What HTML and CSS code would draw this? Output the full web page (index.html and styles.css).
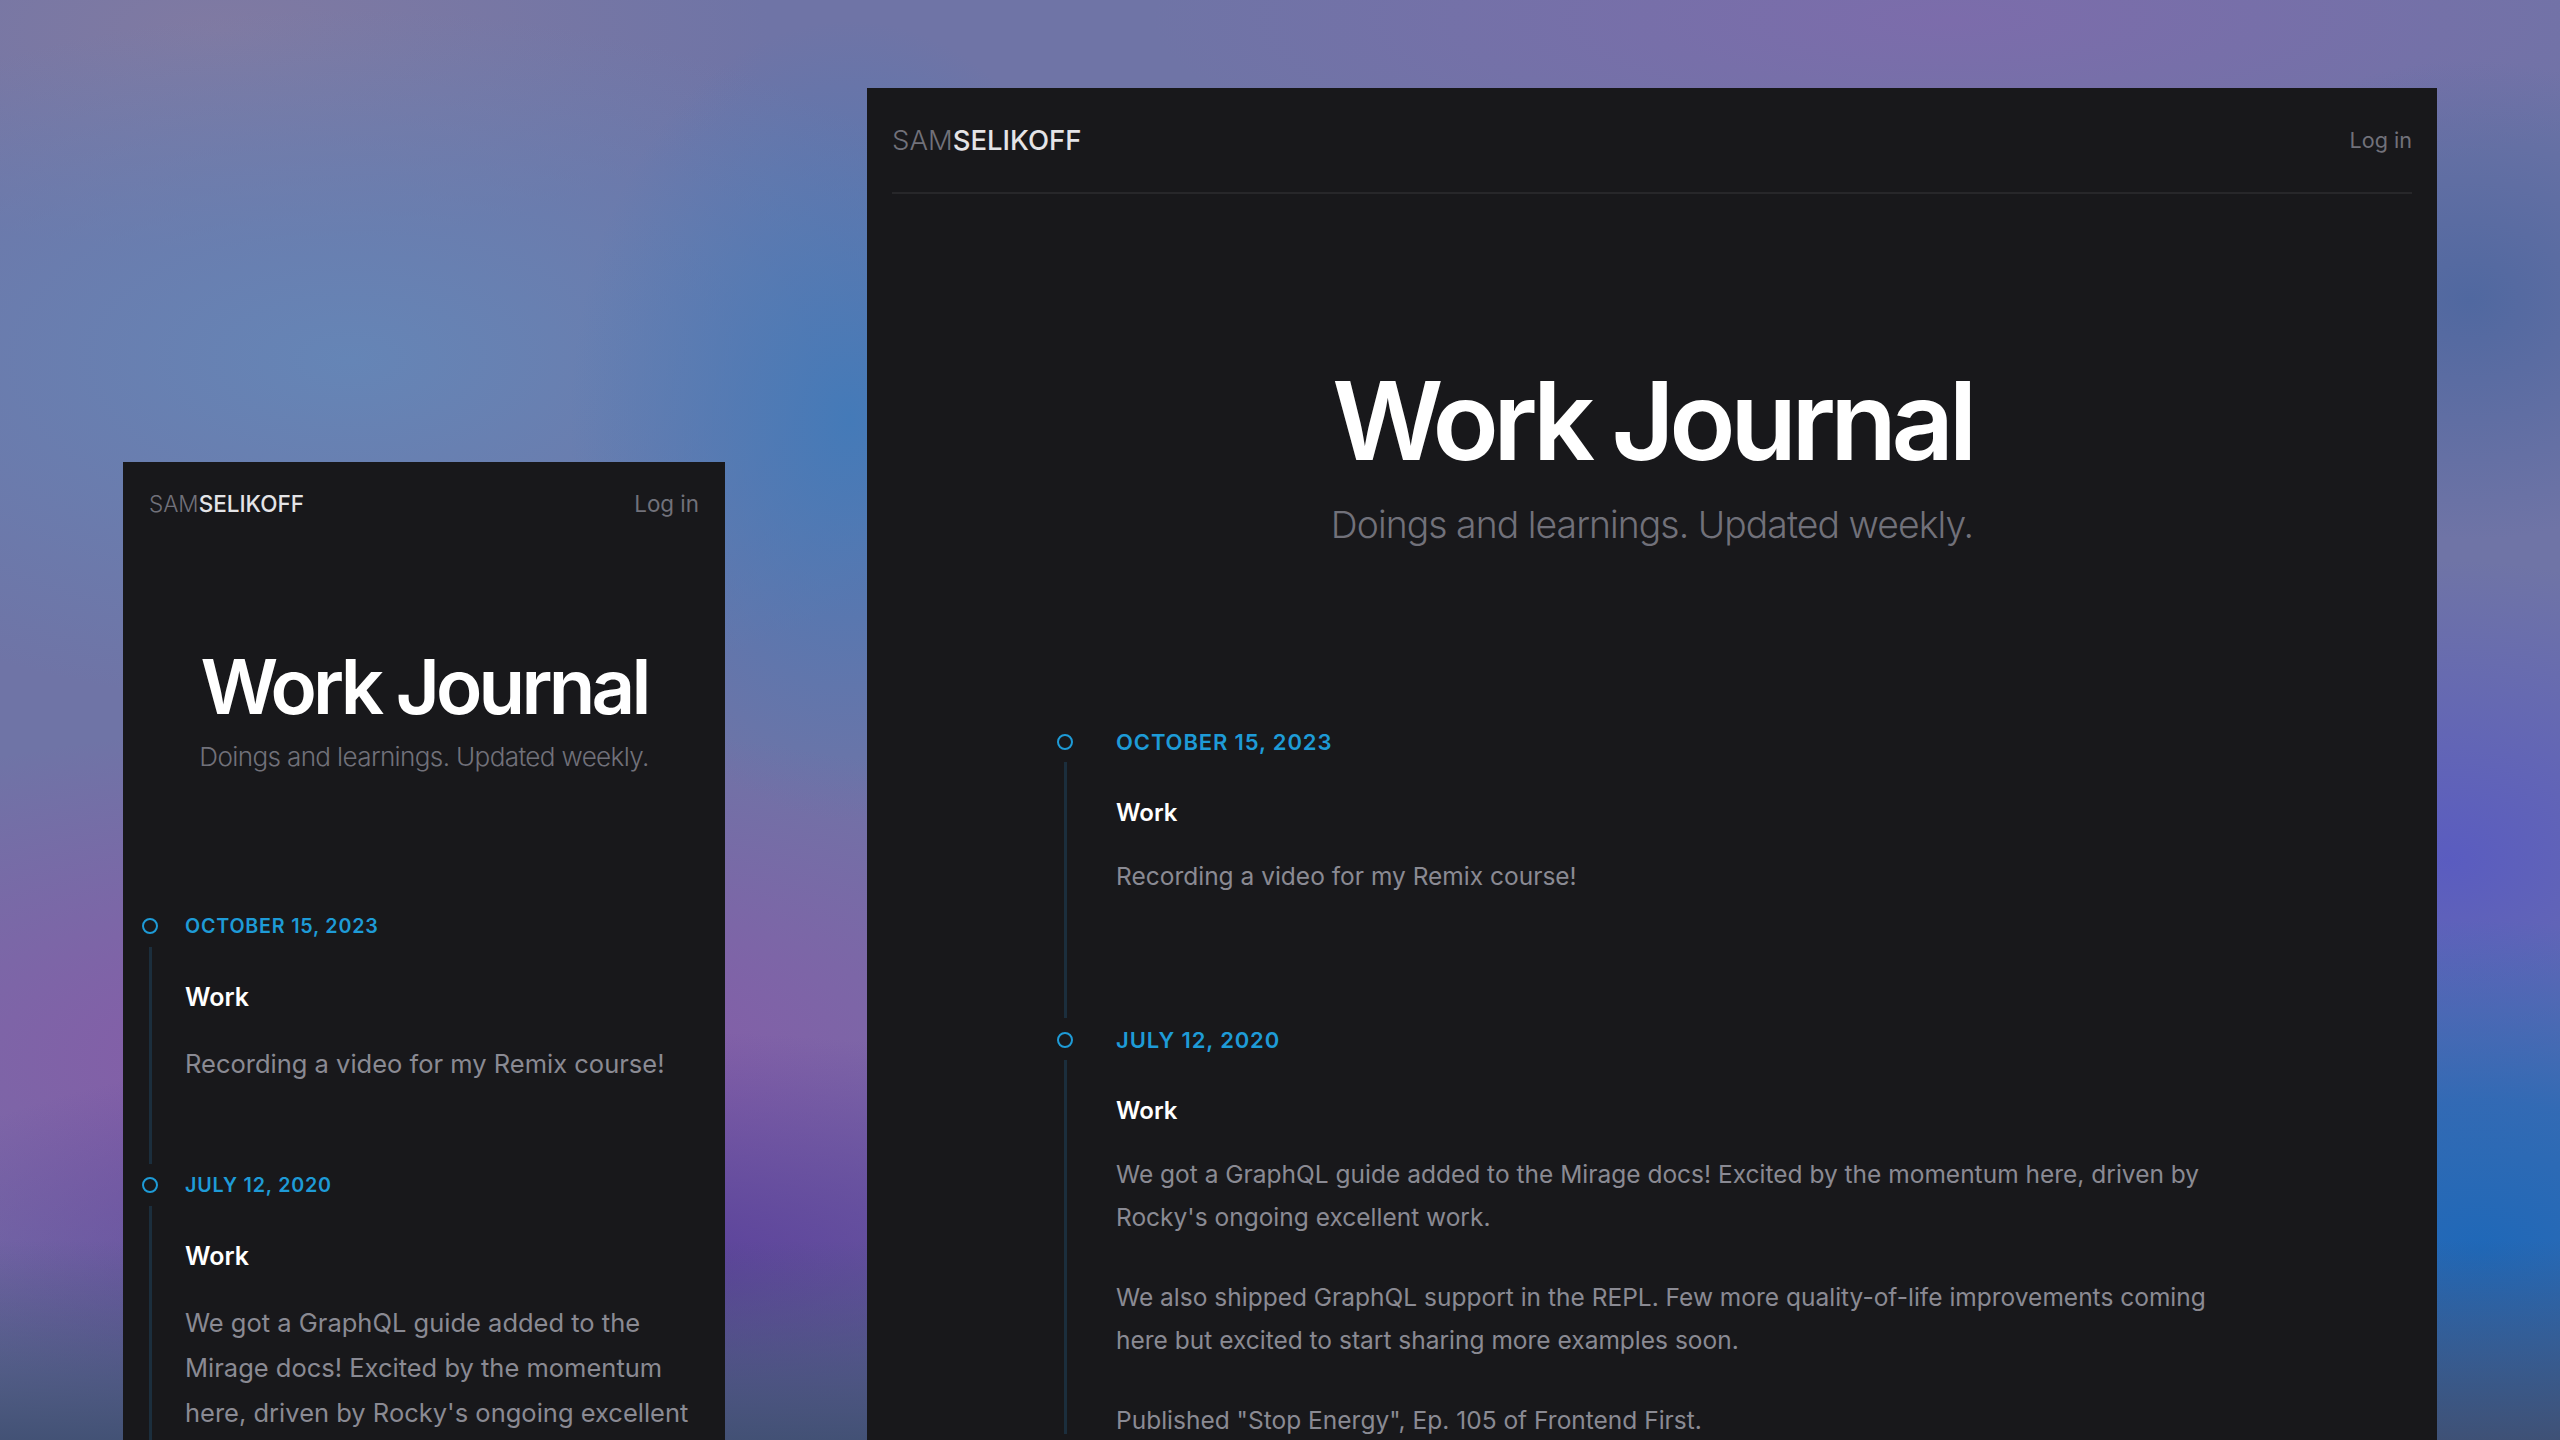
FILE: index.html
```html
<!DOCTYPE html>
<html lang="en">
<head>
    <meta charset="UTF-8">
    <title>Work Journal</title>
    <link rel="stylesheet" href="styles.css">
</head>
<body>
    <!-- small window -->
    <div class="window window-small">
        <header class="nav">
            <div class="logo"><span class="logo-first">SAM</span><span class="logo-last">SELIKOFF</span></div>
            <a class="login">Log in</a>
        </header>
        <div class="hero">
            <h1>Work Journal</h1>
            <p>Doings and learnings. Updated weekly.</p>
        </div>
        <div class="timeline">
            <div class="entry">
                <div class="date">October 15, 2023</div>
                <h2>Work</h2>
                <p>Recording a video for my Remix course!</p>
            </div>
            <div class="entry">
                <div class="date">July 12, 2020</div>
                <h2>Work</h2>
                <p>We got a GraphQL guide added to the Mirage docs! Excited by the momentum here, driven by Rocky's ongoing excellent work.</p>
            </div>
        </div>
    </div>

    <!-- big window -->
    <div class="window window-big">
        <header class="nav">
            <div class="logo"><span class="logo-first">SAM</span><span class="logo-last">SELIKOFF</span></div>
            <a class="login">Log in</a>
        </header>
        <div class="hero">
            <h1>Work Journal</h1>
            <p>Doings and learnings. Updated weekly.</p>
        </div>
        <div class="timeline">
            <div class="entry">
                <div class="date">October 15, 2023</div>
                <h2>Work</h2>
                <p>Recording a video for my Remix course!</p>
            </div>
            <div class="entry">
                <div class="date">July 12, 2020</div>
                <h2>Work</h2>
                <p>We got a GraphQL guide added to the Mirage docs! Excited by the momentum here, driven by Rocky's ongoing excellent work.</p>
                <p>We also shipped GraphQL support in the REPL. Few more quality-of-life improvements coming here but excited to start sharing more examples soon.</p>
                <p>Published "Stop Energy", Ep. 105 of Frontend First.</p>
            </div>
        </div>
    </div>
</body>
</html>
```

FILE: styles.css
```css
*, *::before{
    margin: 0;
    padding: 0;
    box-sizing: border-box;
}

body{
    position: relative;
    height: 1440px;
    overflow: hidden;
    font-family: 'Inter', sans-serif;
    background-color: #6b74a8;
    background-image:
        linear-gradient(to bottom, rgba(62,78,112,0) 1240px, rgba(62,78,112,0.9) 1440px),
        radial-gradient(ellipse 500px 330px at 2480px 1250px, #1f68b8 0%, rgba(31,104,184,0.75) 45%, rgba(31,104,184,0) 100%),
        radial-gradient(ellipse 420px 300px at 2450px 860px, #5a5cc0 0%, rgba(90,92,192,0) 100%),
        radial-gradient(ellipse 300px 240px at 2470px 300px, #5068a0 0%, rgba(80,104,160,0) 100%),
        radial-gradient(ellipse 800px 230px at 620px 1260px, #5a409a 0%, rgba(90,64,154,0) 100%),
        radial-gradient(ellipse 950px 340px at 420px 1060px, #8a57a8 0%, rgba(138,87,168,0) 100%),
        radial-gradient(ellipse 280px 400px at 850px 420px, #447ab8 0%, rgba(68,122,184,0) 100%),
        radial-gradient(ellipse 700px 350px at 350px 360px, #6585b6 0%, rgba(101,133,182,0) 100%),
        radial-gradient(ellipse 550px 220px at 220px 30px, #807aa2 0%, rgba(128,122,162,0) 100%),
        radial-gradient(ellipse 800px 180px at 1950px 20px, #7c6cab 0%, rgba(124,108,171,0) 100%),
        linear-gradient(to bottom, #6f74a6 0%, #6f74a6 100%);
}

/* the two windows sit on the backdrop like on a desktop */
.window{
    position: absolute;
    background-color: #18181b;
    overflow: hidden;
}
.window-small{
    left: 123px;
    top: 462px;
    width: 602px;
    height: 978px;
    padding: 0 26px;
}
.window-big{
    left: 867px;
    top: 88px;
    width: 1570px;
    height: 1352px;
    padding: 0 25px;
}

.nav{
    display: flex;
    justify-content: space-between;
    align-items: center;
}
.window-small .nav{
    height: 83px;
}
.window-big .nav{
    height: 106px;
    border-bottom: 2px solid #27272a;
}
.logo-first{
    color: #71717a;
    font-weight: 300;
}
.logo-last{
    color: #e4e4e7;
    font-weight: 500;
}
.window-small .logo{
    font-size: 22.5px;
}
.window-big .logo{
    font-size: 27.5px;
}
.login{
    color: #71717a;
}
.window-small .login{
    font-size: 22.4px;
}
.window-big .login{
    font-size: 21.6px;
}

.hero{
    text-align: center;
}
.hero h1{
    color: #fff;
    font-weight: 600;
    letter-spacing: -0.05em;
}
.hero p{
    color: #71717a;
    font-weight: 300;
    letter-spacing: -0.025em;
}
.window-small .hero{
    padding-top: 95px;
}
.window-small .hero h1{
    font-size: 76.2px;
    line-height: 92px;
}
.window-small .hero p{
    font-size: 26.1px;
    line-height: 38px;
    margin-top: 6px;
}
.window-big .hero{
    padding-top: 162px;
}
.window-big .hero h1{
    font-size: 109px;
    line-height: 128px;
}
.window-big .hero p{
    font-size: 37.3px;
    line-height: 52px;
    margin-top: 15px;
}

.timeline .date{
    position: relative;
    color: #1e9bd7;
    font-weight: 600;
    text-transform: uppercase;
    letter-spacing: 0.04em;
}
/* ring in front of the date */
.timeline .date::before{
    content: "";
    position: absolute;
    width: 16px;
    height: 16px;
    border: 2px solid #1e9bd7;
    border-radius: 50%;
}
/* line running down to the next date */
.entry{
    position: relative;
}
.entry::before{
    content: "";
    position: absolute;
    width: 3px;
    background-color: #1b2e3d;
}
.entry h2{
    color: #fff;
    font-weight: 600;
}
.entry p{
    color: #8a8a93;
}

.window-small .timeline{
    margin-top: 137px;
    padding-left: 36px;
}
.window-small .entry{
    padding-bottom: 85.5px;
}
.window-small .entry:last-child{
    padding-bottom: 0;
}
.window-small .date{
    font-size: 19.7px;
    line-height: 26px;
}
.window-small .date::before{
    left: -43px;
    top: 5px;
}
.window-small .entry::before{
    left: -36px;
    top: 34px;
    bottom: 8px;
}
.window-small .entry h2{
    font-size: 25px;
    line-height: 34px;
    margin-top: 41px;
}
.window-small .entry p{
    font-size: 25.5px;
    line-height: 45px;
    margin-top: 27px;
}

.window-big .timeline{
    margin-top: 176.5px;
    padding-left: 224px;
    padding-right: 190px;
}
.window-big .entry{
    padding-bottom: 127.5px;
}
.window-big .entry:last-child{
    padding-bottom: 0;
}
.window-big .date{
    font-size: 22px;
    line-height: 28px;
}
.window-big .date::before{
    left: -59px;
    top: 6px;
}
.window-big .entry::before{
    left: -52px;
    top: 34px;
    bottom: 8px;
}
.window-big .entry h2{
    font-size: 24px;
    line-height: 34px;
    margin-top: 40px;
}
.window-big .entry p{
    font-size: 24.5px;
    line-height: 43px;
    margin-top: 25.5px;
}
.window-big .entry p + p{
    margin-top: 37px;
}
```
